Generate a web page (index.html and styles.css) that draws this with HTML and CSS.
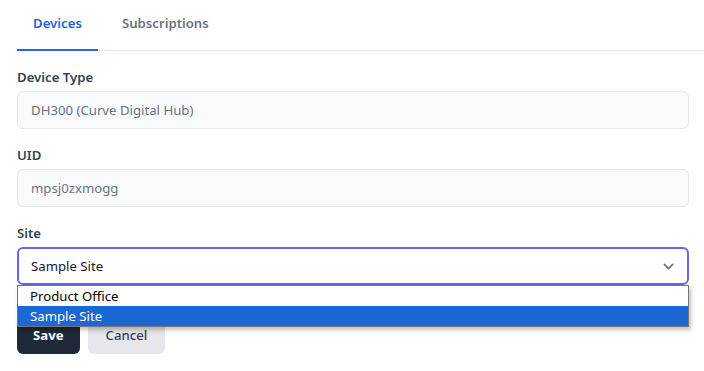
FILE: index.html
```html
<!DOCTYPE html>
<html>
<head>
<meta charset="utf-8">
<link rel="stylesheet" href="styles.css">
</head>
<body>
<div class="page">
  <nav class="tabs">
    <a class="tab active">Devices</a>
    <a class="tab">Subscriptions</a>
  </nav>
  <form class="form">
    <div class="field">
      <label class="label">Device Type</label>
      <div class="input readonly">DH300 (Curve Digital Hub)</div>
    </div>
    <div class="field">
      <label class="label">UID</label>
      <div class="input readonly">mpsj0zxmogg</div>
    </div>
    <div class="field site">
      <label class="label">Site</label>
      <div class="select">
        <span>Sample Site</span>
        <svg class="chevron" viewBox="0 0 20 20" width="21" height="21"><path d="M6 8l4 4 4-4" fill="none" stroke="#6b7280" stroke-width="1.5" stroke-linecap="round" stroke-linejoin="round"/></svg>
      </div>
      <ul class="listbox">
        <li class="option">Product Office</li>
        <li class="option selected">Sample Site</li>
      </ul>
    </div>
    <div class="actions">
      <button type="button" class="btn primary">Save</button>
      <button type="button" class="btn secondary">Cancel</button>
    </div>
  </form>
</div>
</body>
</html>
```
FILE: styles.css
```css
* { box-sizing: border-box; }
html, body { margin: 0; padding: 0; background: #fff; }
body {
  font-family: "Noto Sans", "Open Sans", sans-serif;
  font-size: 13.2px;
  line-height: 20px;
  color: #111827;
}
.page { padding-left: 17px; }
.tabs {
  display: flex;
  gap: 8px;
  border-bottom: 1px solid #e5e7eb;
  height: 51px;
}
.tab {
  padding: 13px 16px 16px;
  font-weight: 600;
  color: #6b7280;
  border-bottom: 2px solid transparent;
  height: 51px;
}
.tab.active { color: #2f5be6; border-bottom-color: #2563eb; }
.form { display: flex; flex-direction: column; gap: 16px; padding: 16px 15px 0 0; }
.field { display: flex; flex-direction: column; gap: 4px; }
.site { position: relative; }
.label { font-weight: 600; color: #374151; }
.input {
  height: 38px;
  padding: 8px 13px;
  border: 1px solid #e5e7eb;
  border-radius: 6px;
  background: #f9fafb;
  color: #6b7280;
}
.select {
  height: 38px;
  display: flex;
  align-items: center;
  justify-content: space-between;
  padding: 0 8px 0 12px;
  border: 2px solid #6366f1;
  border-radius: 6px;
  background: #fff;
  color: #111827;
}
.listbox {
  position: absolute;
  left: 0; right: 0;
  top: 62px;
  margin: 0; padding: 0;
  list-style: none;
  background: #fff;
  border: 1px solid #767676;
  box-shadow: 2px 3px 4px rgba(0,0,0,0.25);
  z-index: 2;
}
.option { height: 20px; padding: 0 12px; color: #000; line-height: 20px; }
.option.selected { background: #1a68d3; color: #fff; }
.actions { display: flex; gap: 8px; margin-top: 15px; }
.btn {
  height: 38px;
  padding: 0 16px;
  border: 0;
  border-radius: 6px;
  font: inherit;
}
.btn.primary { background: #1f2937; color: #fff; font-weight: 700; }
.btn.secondary { background: #e5e7eb; color: #374151; font-weight: 500; padding: 0 18px; }
```
